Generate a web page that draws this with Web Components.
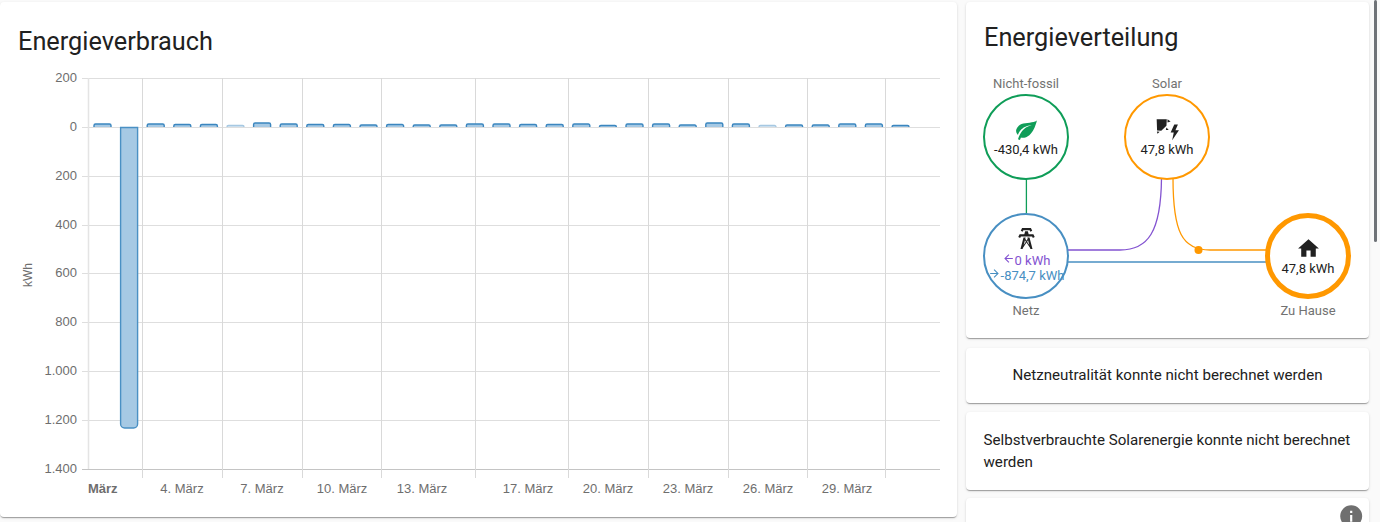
<!DOCTYPE html>
<html lang="de">
<head>
<meta charset="utf-8">
<title>Energie</title>
<style>
html,body{margin:0;height:522px;overflow:hidden;background:#fafafa;}
body{font-family:Roboto,"Liberation Sans",sans-serif;color:#212121;}
.page{display:grid;grid-template-columns:957px 403px;column-gap:9px;padding-top:2px;height:520px;overflow:hidden;align-items:start;}
.side{display:flex;flex-direction:column;gap:9px;}
</style>
</head>
<body>
<div class="page">
  <ha-card-box><energy-chart></energy-chart></ha-card-box>
  <div class="side">
    <ha-card-box style="height:336px"><energy-flow></energy-flow></ha-card-box>
    <note-card center style="margin-top:1px;height:55px;padding-top:16px">Netzneutralität konnte nicht berechnet werden</note-card>
    <note-card style="height:78px;padding-top:17px">Selbstverbrauchte Solarenergie konnte nicht berechnet werden</note-card>
    <info-card style="margin-top:-1px"></info-card>
  </div>
</div>
<fake-scrollbar></fake-scrollbar>
<script>
const ICONS={
 leaf:'M17,8C8,10 5.9,16.17 3.82,21.34L5.71,22L6.66,19.7C7.14,19.87 7.64,20 8,20C19,20 22,3 22,3C21,5 14,5.25 9,6.25C4,7.25 2,11.5 2,13.5C2,15.5 3.75,17.25 3.75,17.25C7,8 17,8 17,8Z',
 home:'M10,20V14H14V20H19V12H22L12,3L2,12H5V20H10Z',
 tower:'M8.28,5.45L6.5,4.55L7.76,2H16.23L17.5,4.55L15.72,5.44L15,4H9L8.28,5.45M18.62,8H14.09L13.3,5H10.7L9.91,8H5.38L4.1,10.55L5.89,11.44L6.62,10H17.38L18.1,11.45L19.89,10.56L18.62,8M17.77,22H15.7L15.46,21.1L12,15.9L8.53,21.1L8.3,22H6.23L9.12,11H11.19L10.83,12.35L12,14.06L13.16,12.35L12.81,11H14.88L17.77,22M11.4,15L10.5,13.65L9.32,18.13L11.4,15M14.68,18.12L13.5,13.64L12.6,15L14.68,18.12Z',
 solar:'M1.6,2.2H11.3L11,8.5L6,13.3L2,13Z M12,2.2L15,4.3L12,5.3Z M1.8,14L4.5,14.2L2.4,16Z M11,10L13.2,12.5H10.4Z M18.5,7.2L15,14.8H18L16.5,22.4L23,12.6H19.6L22,7.2Z',
 info:'M13,9H11V7H13M13,17H11V11H13M12,2A10,10 0 0,0 2,12A10,10 0 0,0 12,22A10,10 0 0,0 22,12A10,10 0 0,0 12,2Z',
 left:'M20,11V13H8L13.5,18.5L12.08,19.92L4.16,12L12.08,4.08L13.5,5.5L8,11H20Z',
 right:'M4,11V13H16L10.5,18.5L11.92,19.92L19.84,12L11.92,4.08L10.5,5.5L16,11H4Z'
};
class HaCardBox extends HTMLElement{
 constructor(){super();this.attachShadow({mode:'open'}).innerHTML=`<style>
 :host{display:block;box-sizing:border-box;background:#fff;border-radius:4px;box-shadow:0 2px 1px -1px rgba(0,0,0,.2),0 1px 1px 0 rgba(0,0,0,.14),0 1px 3px 0 rgba(0,0,0,.12);}
 </style><slot></slot>`;}
}
class EnergyChart extends HTMLElement{
 constructor(){super();
  const tx=[142,222,302,381,475,568,648,728,807,885];
  const gy=[78,127,176,225,273,322,371,420,469];
  const yl=['200','0','200','400','600','800','1.000','1.200','1.400'];
  const xl=[[182,'4. März'],[262,'7. März'],[342,'10. März'],[422,'13. März'],[528,'17. März'],[608,'20. März'],[688,'23. März'],[768,'26. März'],[847,'29. März']];
  const h=[3,0,3,2.5,2.5,1.5,4,3,2.5,2.5,2,2.5,2,2,3,3,2.5,2.5,3,1.5,3,3,2,4,3,1.5,2,2,3,3,1.5];
  let s='';
  gy.forEach((y,i)=>{s+=`<line x1="82" x2="940" y1="${y+.5}" y2="${y+.5}" stroke="${i==8?'#c4c4c4':'#dedede'}"/>`;
   s+=`<text x="77" y="${y+3.5}" text-anchor="end" class="t">${yl[i]}</text>`;});
  s+=`<line x1="88.5" x2="88.5" y1="78" y2="469" stroke="#e4e4e4" stroke-width="1.5"/>`;
  tx.forEach(x=>{s+=`<line x1="${x+.5}" x2="${x+.5}" y1="78" y2="478" stroke="#d9d9d9"/>`;});
  xl.forEach(([x,t])=>{s+=`<text x="${x}" y="493" text-anchor="middle" class="t">${t}</text>`;});
  s+=`<text x="88" y="493" class="t b">März</text>`;
  s+=`<text transform="translate(32 275) rotate(-90)" text-anchor="middle" class="t k">kWh</text>`;
  h.forEach((v,i)=>{const x=+(94+26.6*i).toFixed(1);
   if(i==1){s+=`<path d="M${x},127.5V424a4,4 0 0 0 4,4H${x+13}a4,4 0 0 0 4,-4V127.5Z" fill="#a6c9e4" stroke="#4a90c4" stroke-width="1.4"/>`;return;}
   const y=127-v,op=(i==5||i==25)?.45:1;
   s+=`<path d="M${x},127V${y+1.5}a1.5,1.5 0 0 1 1.5,-1.5H${x+15.5}a1.5,1.5 0 0 1 1.5,1.5V127" fill="#a6c9e4" stroke="#3b86bf" stroke-width="1.4" opacity="${op}"/>`;});
  this.attachShadow({mode:'open'}).innerHTML=`<style>
  :host{display:block;height:515px;}
  h2{margin:0;padding:26px 18px 0;font:400 25.3px/28px Roboto,sans-serif;color:#212121;height:40px;white-space:nowrap;}
  svg{display:block;margin-top:-2px;}
  .t{font:13px "Liberation Sans",Arial,sans-serif;fill:#6e6e6e;}
  .b{font-weight:700;}
  .k{font-size:12px;}
  </style><h2>Energieverbrauch</h2>
  <svg width="957" height="449" viewBox="0 66 957 449" aria-label="Balkendiagramm">${s}</svg>`;
 }
}
class FlowNode extends HTMLElement{
 constructor(){super();this.attachShadow({mode:'open'}).innerHTML=`<style>
 :host{display:flex;flex-direction:column;align-items:center;width:86px;position:relative;z-index:1;font:13px/14px Roboto,sans-serif;}
 .label{color:#727272;font-size:13px;line-height:16px;white-space:nowrap;}
 :host([below]) .label{order:2;margin-top:4px;}
 :host(:not([below])) .label{margin-bottom:2px;}
 .circle{box-sizing:border-box;width:86px;height:86px;padding-bottom:var(--pb,0);border-radius:50%;border:var(--bw,2px) solid var(--c,#000);background:#fff;display:flex;flex-direction:column;align-items:center;justify-content:center;color:#212121;font-size:13px;line-height:14px;white-space:nowrap;}
 svg{width:25px;height:25px;fill:var(--ic,#212121);display:block;margin-bottom:1px;flex:none;}
 ::slotted(*){display:block;}
 </style><div class="label"></div><div class="circle"><svg viewBox="0 0 24 24"><path></path></svg><slot></slot></div>`;}
 connectedCallback(){
  this.shadowRoot.querySelector('.label').textContent=this.getAttribute('label');
  this.shadowRoot.querySelector('path').setAttribute('d',ICONS[this.getAttribute('icon')]);
 }
}
class FlowVal extends HTMLElement{
 constructor(){super();this.attachShadow({mode:'open'}).innerHTML=`<style>
 :host{display:flex;align-items:center;justify-content:center;color:var(--v,#212121);height:15px;font-size:13px;white-space:nowrap;}
 svg{width:13px;height:13px;fill:currentColor;flex:none;}
 </style><svg viewBox="0 0 24 24"><path></path></svg><slot></slot>`;}
 connectedCallback(){this.shadowRoot.querySelector('path').setAttribute('d',ICONS[this.getAttribute('dir')]);}
}
class EnergyFlow extends HTMLElement{
 constructor(){super();this.attachShadow({mode:'open'}).innerHTML=`<style>
 :host{display:block;padding:22px 17px 0;position:relative;height:100%;box-sizing:border-box;}
 h2{margin:0;font:400 25.3px/28px Roboto,sans-serif;color:#212121;white-space:nowrap;margin-left:1px;}
 .rows{position:relative;width:368px;margin-top:24px;display:flex;flex-direction:column;gap:33px;}
 .row{display:flex;justify-content:space-between;align-items:flex-start;}
 .spacer{width:86px;}
 svg.lines{position:absolute;left:0;top:0;width:368px;height:240px;overflow:visible;}
 </style><h2>Energieverteilung</h2>
 <div class="rows">
  <svg class="lines" viewBox="983 76 368 240" fill="none" stroke-width="1.3">
   <path d="M1026.4 178V214" stroke="#0f9d58"/>
   <path d="M1161.5 178C1161 232 1148 250 1120 250H1068" stroke="#8353d1"/>
   <path d="M1173 178C1173 232 1182 250 1210 250H1268" stroke="#ff9800"/>
   <path d="M1068 262H1268" stroke="#488fc2" stroke-width="1.6"/>
   <circle cx="1198.5" cy="250" r="4" fill="#ff9800" stroke="none"/>
  </svg>
  <div class="row">
   <flow-node label="Nicht-fossil" icon="leaf" style="--c:#0f9d58;--ic:#0f9d58"><span>-430,4 kWh</span></flow-node>
   <flow-node label="Solar" icon="solar" style="--c:#ff9800"><span>47,8 kWh</span></flow-node>
   <div class="spacer"></div>
  </div>
  <div class="row">
   <flow-node below label="Netz" icon="tower" style="--c:#488fc2;--pb:5px">
    <flow-val dir="left" style="--v:#8353d1">0 kWh</flow-val>
    <flow-val dir="right" style="--v:#488fc2">-874,7 kWh</flow-val>
   </flow-node>
   <flow-node below label="Zu Hause" icon="home" style="--c:#ff9800;--bw:5px"><span>47,8 kWh</span></flow-node>
  </div>
 </div>`;}
}
class NoteCard extends HTMLElement{
 constructor(){super();this.attachShadow({mode:'open'}).innerHTML=`<style>
 :host{display:block;box-sizing:border-box;background:#fff;border-radius:4px;box-shadow:0 2px 1px -1px rgba(0,0,0,.2),0 1px 1px 0 rgba(0,0,0,.14),0 1px 3px 0 rgba(0,0,0,.12);padding:16px 17.5px;font:15.14px/22px Roboto,sans-serif;color:#212121;}
 :host([center]){text-align:center;}
 </style><slot></slot>`;}
}
class InfoCard extends HTMLElement{
 constructor(){super();this.attachShadow({mode:'open'}).innerHTML=`<style>
 :host{display:flex;justify-content:flex-end;background:#fff;border-radius:4px;height:60px;padding:4.8px 5px;box-sizing:border-box;box-shadow:0 2px 1px -1px rgba(0,0,0,.2),0 1px 1px 0 rgba(0,0,0,.14),0 1px 3px 0 rgba(0,0,0,.12);}
 svg{width:26.4px;height:26.4px;fill:#6f6f6f;display:block;}
 </style><svg viewBox="0 0 24 24"><path d="${ICONS.info}"/></svg>`;}
}
class FakeScrollbar extends HTMLElement{
 constructor(){super();this.attachShadow({mode:'open'}).innerHTML=`<style>
 :host{position:fixed;top:0;left:1374px;width:3px;height:242px;background:#6f7378;border-radius:2px;}
 </style>`;}
}
[['ha-card-box',HaCardBox],['energy-chart',EnergyChart],['flow-node',FlowNode],['flow-val',FlowVal],['energy-flow',EnergyFlow],['note-card',NoteCard],['info-card',InfoCard],['fake-scrollbar',FakeScrollbar]].forEach(([n,c])=>customElements.define(n,c));
</script>
</body>
</html>
